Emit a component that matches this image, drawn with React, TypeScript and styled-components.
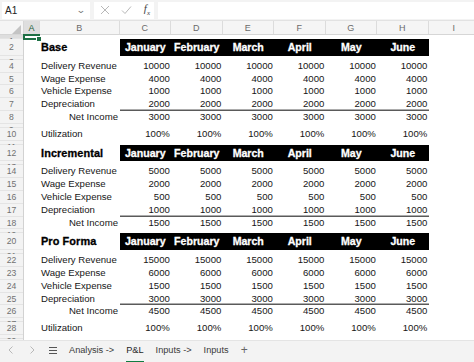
import styled, { createGlobalStyle } from "styled-components";

const GRID = "24px 16px 79.5px repeat(7, 51.5px)";
const TINY = 4;
const HEAD = 16.8;
const LINE = 12.8;
const GREEN = "#1d7044";

const GlobalStyle = createGlobalStyle`
    html, body {
        margin: 0;
        padding: 0;
        background: #ffffff;
    }
    body {
        font-family: "Liberation Sans", Arial, sans-serif;
        color: #111111;
    }
`;

const Page = styled.div`
    width: 474px;
    height: 362px;
    display: flex;
    flex-direction: column;
    overflow: hidden;
    background: #ffffff;
`;

/* formula bar */
const FormulaBar = styled.div`
    flex: none;
    height: 20px;
    display: flex;
    align-items: center;
    gap: 4px;
    padding: 0 0 0 2px;
    background: #f3f3f3;
    border-bottom: 1px solid #e2e2e2;
`;

const NameBox = styled.div`
    width: 80px;
    height: 17px;
    display: flex;
    align-items: center;
    justify-content: space-between;
    padding: 0 5px 0 3px;
    background: #ffffff;
    font-size: 10px;
    color: #222222;
`;

const Chevron = styled.span`
    font-size: 9px;
    color: #777777;
    transform: scaleX(1.3);
`;

const ActionBox = styled.div`
    height: 17px;
    width: 50px;
    display: flex;
    align-items: center;
    justify-content: space-between;
    padding: 0 4px 0 6px;
    background: #ffffff;
`;

const Fx = styled.span`
    font-family: "Liberation Serif", "Times New Roman", serif;
    font-style: italic;
    font-size: 11px;
    color: #444444;
    sub {
        font-size: 7px;
    }
`;

const FormulaInput = styled.div`
    flex: 1;
    height: 17px;
    background: #ffffff;
`;

/* sheet */
const Sheet = styled.div`
    flex: 1;
    position: relative;
    overflow: hidden;
`;

const Row = styled.div<{ $h: number }>`
    display: grid;
    grid-template-columns: ${GRID};
    height: ${(p) => p.$h}px;
    line-height: ${(p) => p.$h}px;
    overflow: hidden;
`;

const ColHeadRow = styled(Row)`
    background: #f5f5f5;
    border-bottom: 1px solid #d6d6d6;
    box-sizing: border-box;
`;

const Corner = styled.div`
    display: flex;
    align-items: flex-end;
    justify-content: flex-end;
    padding: 0 2px 1px 0;
    border-right: 1px solid #d6d6d6;
`;

const ColHead = styled.div<{ $active?: boolean }>`
    display: flex;
    align-items: center;
    justify-content: center;
    font-size: 9px;
    color: ${(p) => (p.$active ? "#1a5c38" : "#6a6a6a")};
    background: ${(p) => (p.$active ? "#dedede" : "transparent")};
    border-right: 1px solid #dcdcdc;
    box-shadow: ${(p) => (p.$active ? `inset 0 -1px 0 ${GREEN}` : "none")};
`;

const RowNum = styled.div<{ $h: number; $active?: boolean }>`
    font-size: 8.6px;
    line-height: ${(p) => Math.max(p.$h, LINE)}px;
    height: ${(p) => p.$h}px;
    text-align: center;
    color: #707070;
    background: ${(p) => (p.$active ? "#dedede" : "#f3f3f3")};
    border-right: 1px solid #d2d2d2;
    box-shadow: inset 0 -1px 0 #e4e4e4;
    overflow: hidden;
`;

const Cell = styled.div<{ $rule?: boolean }>`
    font-size: 9.6px;
    white-space: nowrap;
    overflow: visible;
    padding: 0 1px;
    color: #161616;
    box-shadow: ${(p) => (p.$rule ? "inset 0 -1.5px 0 #5a5a5a" : "none")};
`;

const Label = styled(Cell)<{ $right?: boolean }>`
    text-align: ${(p) => (p.$right ? "right" : "left")};
    padding-right: 1.5px;
`;

const Num = styled(Cell)`
    text-align: right;
    padding-right: 1.2px;
`;

const Title = styled(Cell)`
    font-size: 10.9px;
    font-weight: 700;
    color: #000;
    -webkit-text-stroke: 0.3px #000;
    letter-spacing: 0.1px;
`;

const MonthCell = styled.div`
    background: #000000;
    color: #ffffff;
    font-size: 10.6px;
    font-weight: 700;
    -webkit-text-stroke: 0.3px #fff;
    text-align: center;
    white-space: nowrap;
`;

const Selection = styled.div`
    position: absolute;
    left: 23px;
    top: 13px;
    width: 17px;
    height: 6px;
    box-sizing: border-box;
    border: 2px solid ${GREEN};
`;

const Handle = styled.div`
    position: absolute;
    right: -4px;
    bottom: -4px;
    width: 4px;
    height: 4px;
    background: ${GREEN};
    border: 1px solid #fff;
`;

/* sheet tabs */
const TabBar = styled.div`
    flex: none;
    height: 22px;
    box-sizing: border-box;
    display: flex;
    align-items: flex-start;
    padding: 3px 0 0 0;
    background: #f3f3f3;
    border-top: 1px solid #e4e4e4;
    font-size: 9.2px;
    color: #3a3a3a;
`;

const NavSlot = styled.span`
    width: 22px;
    height: 12px;
    display: flex;
    align-items: center;
    padding-left: 8px;
    box-sizing: border-box;
`;

const MenuIcon = styled.span`
    width: 19px;
    height: 12px;
    display: flex;
    align-items: center;
    padding-left: 5px;
    box-sizing: border-box;
`;

const Tab = styled.span<{ $active?: boolean }>`
    padding: 0 6px 3px;
    line-height: 12px;
    position: relative;
    white-space: nowrap;
    color: ${(p) => (p.$active ? "#1f1f1f" : "#3a3a3a")};
    &::after {
        content: "";
        display: ${(p) => (p.$active ? "block" : "none")};
        position: absolute;
        left: 6px;
        right: 6px;
        bottom: -4px;
        height: 2.5px;
        background: #107c41;
    }
`;

const Plus = styled.span`
    padding-left: 6px;
    font-size: 12px;
    line-height: 12px;
    color: #666666;
`;

type Section = {
    title: string;
    first: number;
    items: [string, number][];
    net: number;
    util: boolean;
};

const months = ["January", "February", "March", "April", "May", "June"];
const cols = ["A", "B", "C", "D", "E", "F", "G", "H", "I"];

const sections: Section[] = [
    {
        title: "Base",
        first: 2,
        items: [
            ["Delivery Revenue", 10000],
            ["Wage Expense", 4000],
            ["Vehicle Expense", 1000],
            ["Depreciation", 2000],
        ],
        net: 3000,
        util: true,
    },
    {
        title: "Incremental",
        first: 12,
        items: [
            ["Delivery Revenue", 5000],
            ["Wage Expense", 2000],
            ["Vehicle Expense", 500],
            ["Depreciation", 1000],
        ],
        net: 1500,
        util: false,
    },
    {
        title: "Pro Forma",
        first: 20,
        items: [
            ["Delivery Revenue", 15000],
            ["Wage Expense", 6000],
            ["Vehicle Expense", 1500],
            ["Depreciation", 3000],
        ],
        net: 4500,
        util: true,
    },
];

const Spacer = ({ n }: { n: number }) => (
    <Row $h={TINY}>
        <RowNum $h={TINY} $active={n === 1}>
            {n}
        </RowNum>
    </Row>
);

const DataRow = ({
    n,
    label,
    values,
    right,
    rule,
}: {
    n: number;
    label: string;
    values: string[];
    right?: boolean;
    rule?: boolean;
}) => (
    <Row $h={LINE}>
        <RowNum $h={LINE}>{n}</RowNum>
        <Cell />
        <Label $right={right}>{label}</Label>
        {values.map((v, i) => (
            <Num key={i} $rule={rule}>
                {v}
            </Num>
        ))}
        <Cell />
    </Row>
);

const renderSection = (s: Section) => {
    const out = [];
    const r = s.first;
    out.push(
        <Row $h={HEAD} key={`h${r}`}>
            <RowNum $h={HEAD}>{r}</RowNum>
            <Cell />
            <Title>{s.title}</Title>
            {months.map((m) => (
                <MonthCell key={m}>{m}</MonthCell>
            ))}
            <Cell />
        </Row>
    );
    out.push(<Spacer n={r + 1} key={`s${r + 1}`} />);
    s.items.forEach(([label, v], i) => {
        out.push(
            <DataRow
                key={`d${r + 2 + i}`}
                n={r + 2 + i}
                label={label}
                values={months.map(() => String(v))}
                rule={i === s.items.length - 1}
            />
        );
    });
    out.push(
        <DataRow
            key={`n${r + 6}`}
            n={r + 6}
            label="Net Income"
            values={months.map(() => String(s.net))}
            right
        />
    );
    out.push(<Spacer n={r + 7} key={`s${r + 7}`} />);
    if (s.util) {
        out.push(
            <DataRow
                key={`u${r + 8}`}
                n={r + 8}
                label="Utilization"
                values={months.map(() => "100%")}
            />
        );
        out.push(<Spacer n={r + 9} key={`s${r + 9}`} />);
    }
    return out;
};

const Chev = ({ dir }: { dir: "l" | "r" }) => (
    <svg width="5" height="8" viewBox="0 0 5 8">
        <path
            d={dir === "l" ? "M4.5 0.5L1 4l3.5 3.5" : "M0.5 0.5L4 4 0.5 7.5"}
            stroke="#b8b8b8"
            strokeWidth="1"
            fill="none"
        />
    </svg>
);

const App = () => {
    return (
        <Page>
            <GlobalStyle />
            <FormulaBar>
                <NameBox>
                    <span>A1</span>
                    <Chevron>⌄</Chevron>
                </NameBox>
                <ActionBox>
                    <svg width="10" height="10" viewBox="0 0 10 10">
                        <path
                            d="M1 1l8 8M9 1l-8 8"
                            stroke="#b8b8b8"
                            strokeWidth="1"
                            fill="none"
                        />
                    </svg>
                    <svg width="11" height="10" viewBox="0 0 11 10">
                        <path
                            d="M1 5.5l3 3L10 1.5"
                            stroke="#b8b8b8"
                            strokeWidth="1"
                            fill="none"
                        />
                    </svg>
                    <Fx>
                        f<sub>x</sub>
                    </Fx>
                </ActionBox>
                <FormulaInput />
            </FormulaBar>

            <Sheet>
                <ColHeadRow $h={14}>
                    <Corner>
                        <svg width="9" height="9" viewBox="0 0 9 9">
                            <polygon points="9,0 9,9 0,9" fill="#c4c4c4" />
                        </svg>
                    </Corner>
                    {cols.map((c) => (
                        <ColHead key={c} $active={c === "A"}>
                            {c}
                        </ColHead>
                    ))}
                </ColHeadRow>
                <Spacer n={1} />
                {sections.map((s) => renderSection(s))}
                <Spacer n={29} />
                <Selection>
                    <Handle />
                </Selection>
            </Sheet>

            <TabBar>
                <NavSlot>
                    <Chev dir="l" />
                </NavSlot>
                <NavSlot>
                    <Chev dir="r" />
                </NavSlot>
                <MenuIcon>
                    <svg width="8" height="7" viewBox="0 0 8 7">
                        <path
                            d="M0 0.5h8M0 3.5h8M0 6.5h8"
                            stroke="#555"
                            strokeWidth="1"
                        />
                    </svg>
                </MenuIcon>
                <Tab>Analysis -&gt;</Tab>
                <Tab $active>P&amp;L</Tab>
                <Tab>Inputs -&gt;</Tab>
                <Tab>Inputs</Tab>
                <Plus>+</Plus>
            </TabBar>
        </Page>
    );
};

export default App;
